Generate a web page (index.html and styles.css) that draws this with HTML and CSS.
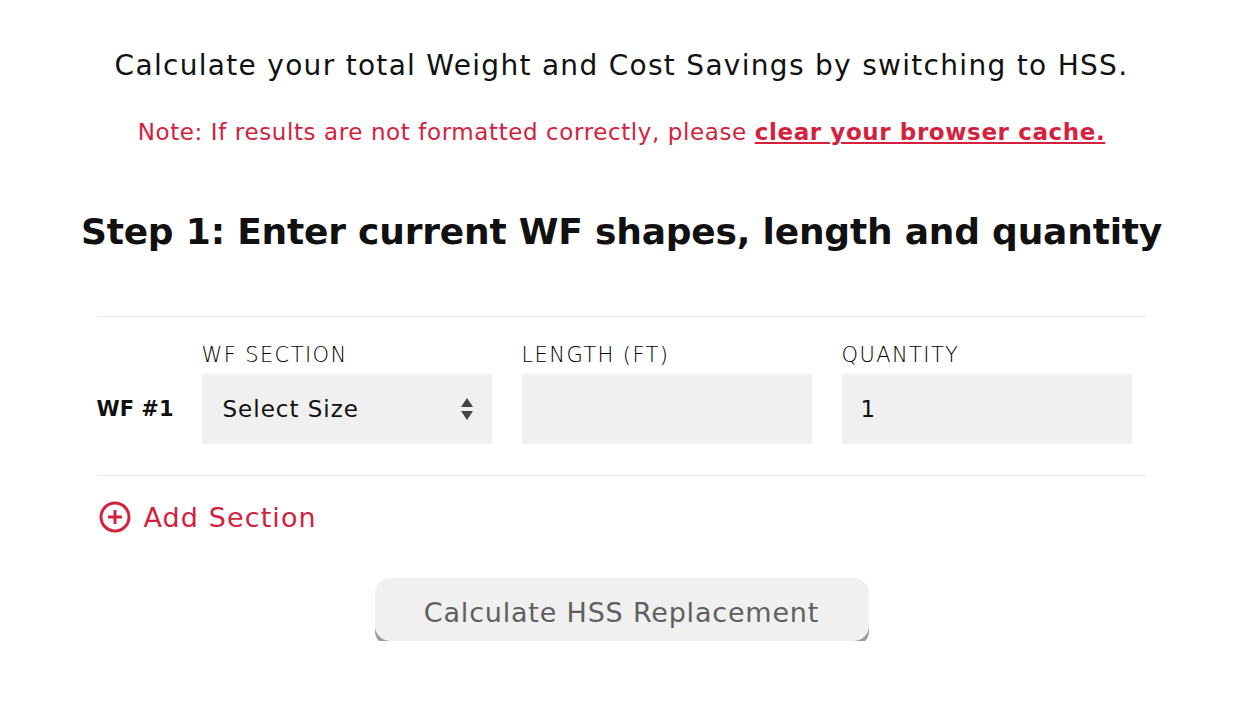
FILE: index.html
```html
<!DOCTYPE html>
<html lang="en">
<head>
    <meta charset="UTF-8">
    <meta name="viewport" content="width=device-width, initial-scale=1.0">
    <title>HSS Calculator</title>
    <link rel="stylesheet" href="styles.css">
</head>
<body>
    <div class="calculator">
        <p class="intro">Calculate your total Weight and Cost Savings by switching to HSS.</p>
        <p class="note">Note: If results are not formatted correctly, please <a href="#">clear your browser cache.</a></p>

        <h1 class="step-title">Step 1: Enter current WF shapes, length and quantity</h1>

        <div class="section-row">
            <div class="row-name">WF #1</div>
            <div class="field">
                <label>WF Section</label>
                <div class="select-box">
                    <span>Select Size</span>
                    <svg class="arrows" width="14" height="24" viewBox="0 0 14 24">
                        <path d="M7 1 L13 10 L1 10 Z" fill="#444"/>
                        <path d="M1 14 L13 14 L7 23 Z" fill="#444"/>
                    </svg>
                </div>
            </div>
            <div class="field">
                <label>Length (ft)</label>
                <div class="input-box"></div>
            </div>
            <div class="field">
                <label>Quantity</label>
                <div class="input-box">1</div>
            </div>
        </div>

        <a class="add-section" href="#">
            <svg width="32" height="32" viewBox="0 0 32 32">
                <circle cx="16" cy="16" r="14" fill="none" stroke="#d4213d" stroke-width="3"/>
                <path d="M16 9 V23 M9 16 H23" stroke="#d4213d" stroke-width="3"/>
            </svg>
            Add Section
        </a>

        <div class="actions">
            <button class="calc-btn">Calculate HSS Replacement</button>
        </div>
    </div>
</body>
</html>
```

FILE: styles.css
```css
/* global */
body {
    margin: 0;
    background: #fff;
    font-family: "DejaVu Sans", "Open Sans", sans-serif;
    color: #111;
}

.calculator {
    width: 1050px;
    margin: 0 auto;
    padding-top: 44px;
}

/* header texts */
.intro {
    margin: 0;
    text-align: center;
    font-size: 28px;
    line-height: 44px;
    letter-spacing: 1.3px;
}

.note {
    margin: 22px 0 0;
    text-align: center;
    font-size: 23px;
    line-height: 44px;
    letter-spacing: 0.6px;
    color: #d4213d;
}

.note a {
    color: #d4213d;
    font-weight: 700;
}

.step-title {
    margin: 56px -50px 0;
    text-align: center;
    white-space: nowrap;
    font-size: 36px;
    line-height: 44px;
    font-weight: 700;
    letter-spacing: -0.2px;
}

/* section row */
.section-row {
    display: flex;
    align-items: flex-end;
    margin-top: 62px;
    padding: 25px 0 31px;
    border-top: 1px solid #ebebeb;
    border-bottom: 1px solid #ebebeb;
}

.row-name {
    flex: 0 0 105px;
    height: 70px;
    line-height: 70px;
    white-space: nowrap;
    font-size: 21px;
    font-weight: 700;
}

.field {
    flex: 0 0 290px;
}

.field + .field {
    margin-left: 30px;
}

.field label {
    display: block;
    height: 32px;
    line-height: 26px;
    font-size: 21px;
    font-weight: 200;
    letter-spacing: 1.4px;
    color: #000;
    text-transform: uppercase;
}

.select-box,
.input-box {
    display: flex;
    align-items: center;
    justify-content: space-between;
    height: 70px;
    padding: 0 18px 0 21px;
    background: #f0f0f0;
    font-size: 23px;
    letter-spacing: 1px;
    box-sizing: border-box;
}

.input-box {
    padding-left: 19px;
}

/* add section link */
.add-section {
    display: inline-flex;
    align-items: center;
    gap: 13px;
    margin-top: 25px;
    margin-left: 2px;
    color: #d4213d;
    font-size: 27px;
    letter-spacing: 1.1px;
    text-decoration: none;
}

/* calculate button */
.actions {
    display: flex;
    justify-content: center;
    margin-top: 41px;
}

.calc-btn {
    width: 494px;
    height: 63px;
    padding: 5px 0 0;
    border: none;
    border-radius: 15px;
    background: #f0f0f0;
    box-shadow: 0 5px 0 #9a9a9a;
    color: #5f5f5f;
    font-family: inherit;
    font-size: 27px;
    letter-spacing: 0.8px;
    cursor: pointer;
}
```
